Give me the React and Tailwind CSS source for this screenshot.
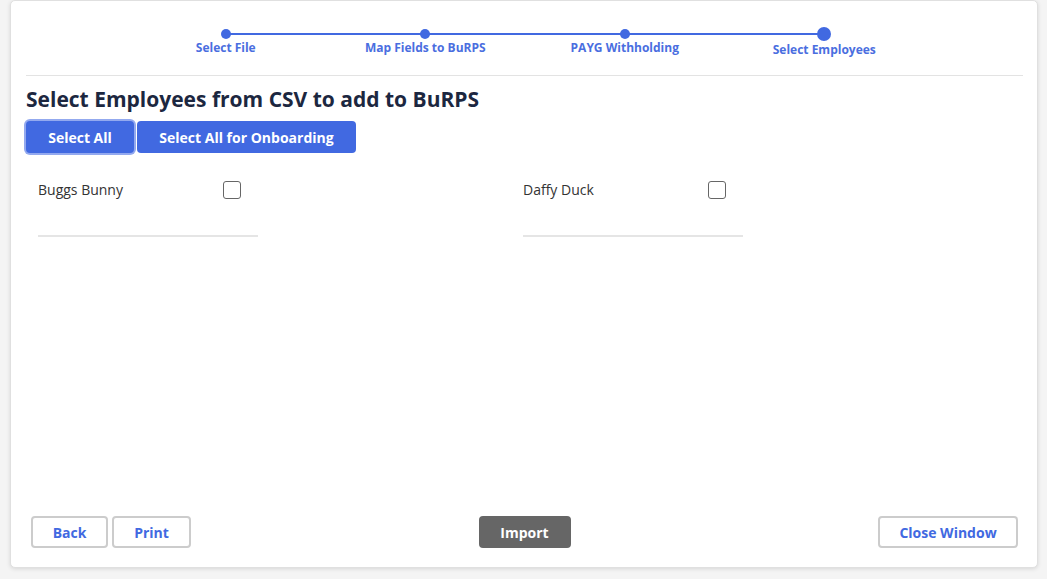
import React from "react";

const steps = [
  { label: "Select File", active: false },
  { label: "Map Fields to BuRPS", active: false },
  { label: "PAYG Withholding", active: false },
  { label: "Select Employees", active: true },
];

function Employee({ name }) {
  return (
    <div className="w-[220px] border-b-2 border-[#e5e5e5] pt-[9px] pb-[36px]">
      <div className="flex items-center justify-between pr-[17px]">
        <span className="text-[14px] text-[#333] leading-[18px]">{name}</span>
        <span className="w-[18px] h-[18px] border border-[#666] rounded-[3px] bg-white" />
      </div>
    </div>
  );
}

export default function App() {
  return (
    <div
      className="min-h-[579px] bg-[#f4f4f4] pl-[10px] pr-[9px]"
      style={{ fontFamily: "'Open Sans', 'Noto Sans', sans-serif" }}
    >
      <div className="h-[568px] bg-white border border-[#e0e0e0] rounded-[5px] shadow-[0_1px_4px_rgba(0,0,0,0.12)] flex flex-col">
        {/* Stepper */}
        <div className="mx-auto w-[800px] pl-[2px] pt-[26px]">
          <div className="relative grid grid-cols-4">
            <div className="absolute left-[100px] right-[100px] top-[6px] h-[2px] bg-[#4169e1]" />
            {steps.map((s) => (
              <div
                key={s.label}
                className={
                  "relative flex flex-col items-center " +
                  (s.active ? "pt-0" : "pt-[2px]")
                }
              >
                <div
                  className={
                    "rounded-full bg-[#4169e1] " +
                    (s.active ? "w-[14px] h-[14px]" : "w-[10px] h-[10px]")
                  }
                />
                <div className="mt-[1px] text-[12px] leading-[16px] font-bold text-[#4a6ee0]">
                  {s.label}
                </div>
              </div>
            ))}
          </div>
        </div>

        <div className="ml-[15px] mr-[14px] mt-[17px] border-t border-[#e3e3e3]" />

        <div className="px-[15px]">
          <h1 className="mt-[9px] text-[21px] leading-[28px] font-bold text-[#1c2740]">
            Select Employees from CSV to add to BuRPS
          </h1>
          <div className="mt-[8px] flex gap-[3px]">
            <button className="h-[32px] w-[108px] rounded-[4px] ring-2 ring-[#93a9ef] bg-[#4169e1] text-white text-[14px] font-bold">
              Select All
            </button>
            <button className="h-[32px] w-[219px] rounded-[4px] bg-[#4169e1] text-white text-[14px] font-bold">
              Select All for Onboarding
            </button>
          </div>

          <div className="mt-[19px] pl-[12px] grid grid-cols-[485px_485px]">
            <Employee name="Buggs Bunny" />
            <Employee name="Daffy Duck" />
          </div>
        </div>

        <div className="mt-auto grid grid-cols-3 items-center pl-[20px] pr-[19px] pb-[19px]">
          <div className="flex gap-[4px] justify-self-start">
            <button className="h-[32px] w-[77px] rounded-[4px] border-2 border-[#cccccc] bg-white text-[14px] font-bold text-[#4169e1]">
              Back
            </button>
            <button className="h-[32px] w-[79px] rounded-[4px] border-2 border-[#cccccc] bg-white text-[14px] font-bold text-[#4169e1]">
              Print
            </button>
          </div>
          <button className="justify-self-center h-[32px] w-[92px] rounded-[4px] bg-[#666666] text-[14px] font-bold text-white">
            Import
          </button>
          <button className="justify-self-end h-[32px] w-[140px] rounded-[4px] border-2 border-[#cccccc] bg-white text-[14px] font-bold text-[#4169e1]">
            Close Window
          </button>
        </div>
      </div>
    </div>
  );
}
